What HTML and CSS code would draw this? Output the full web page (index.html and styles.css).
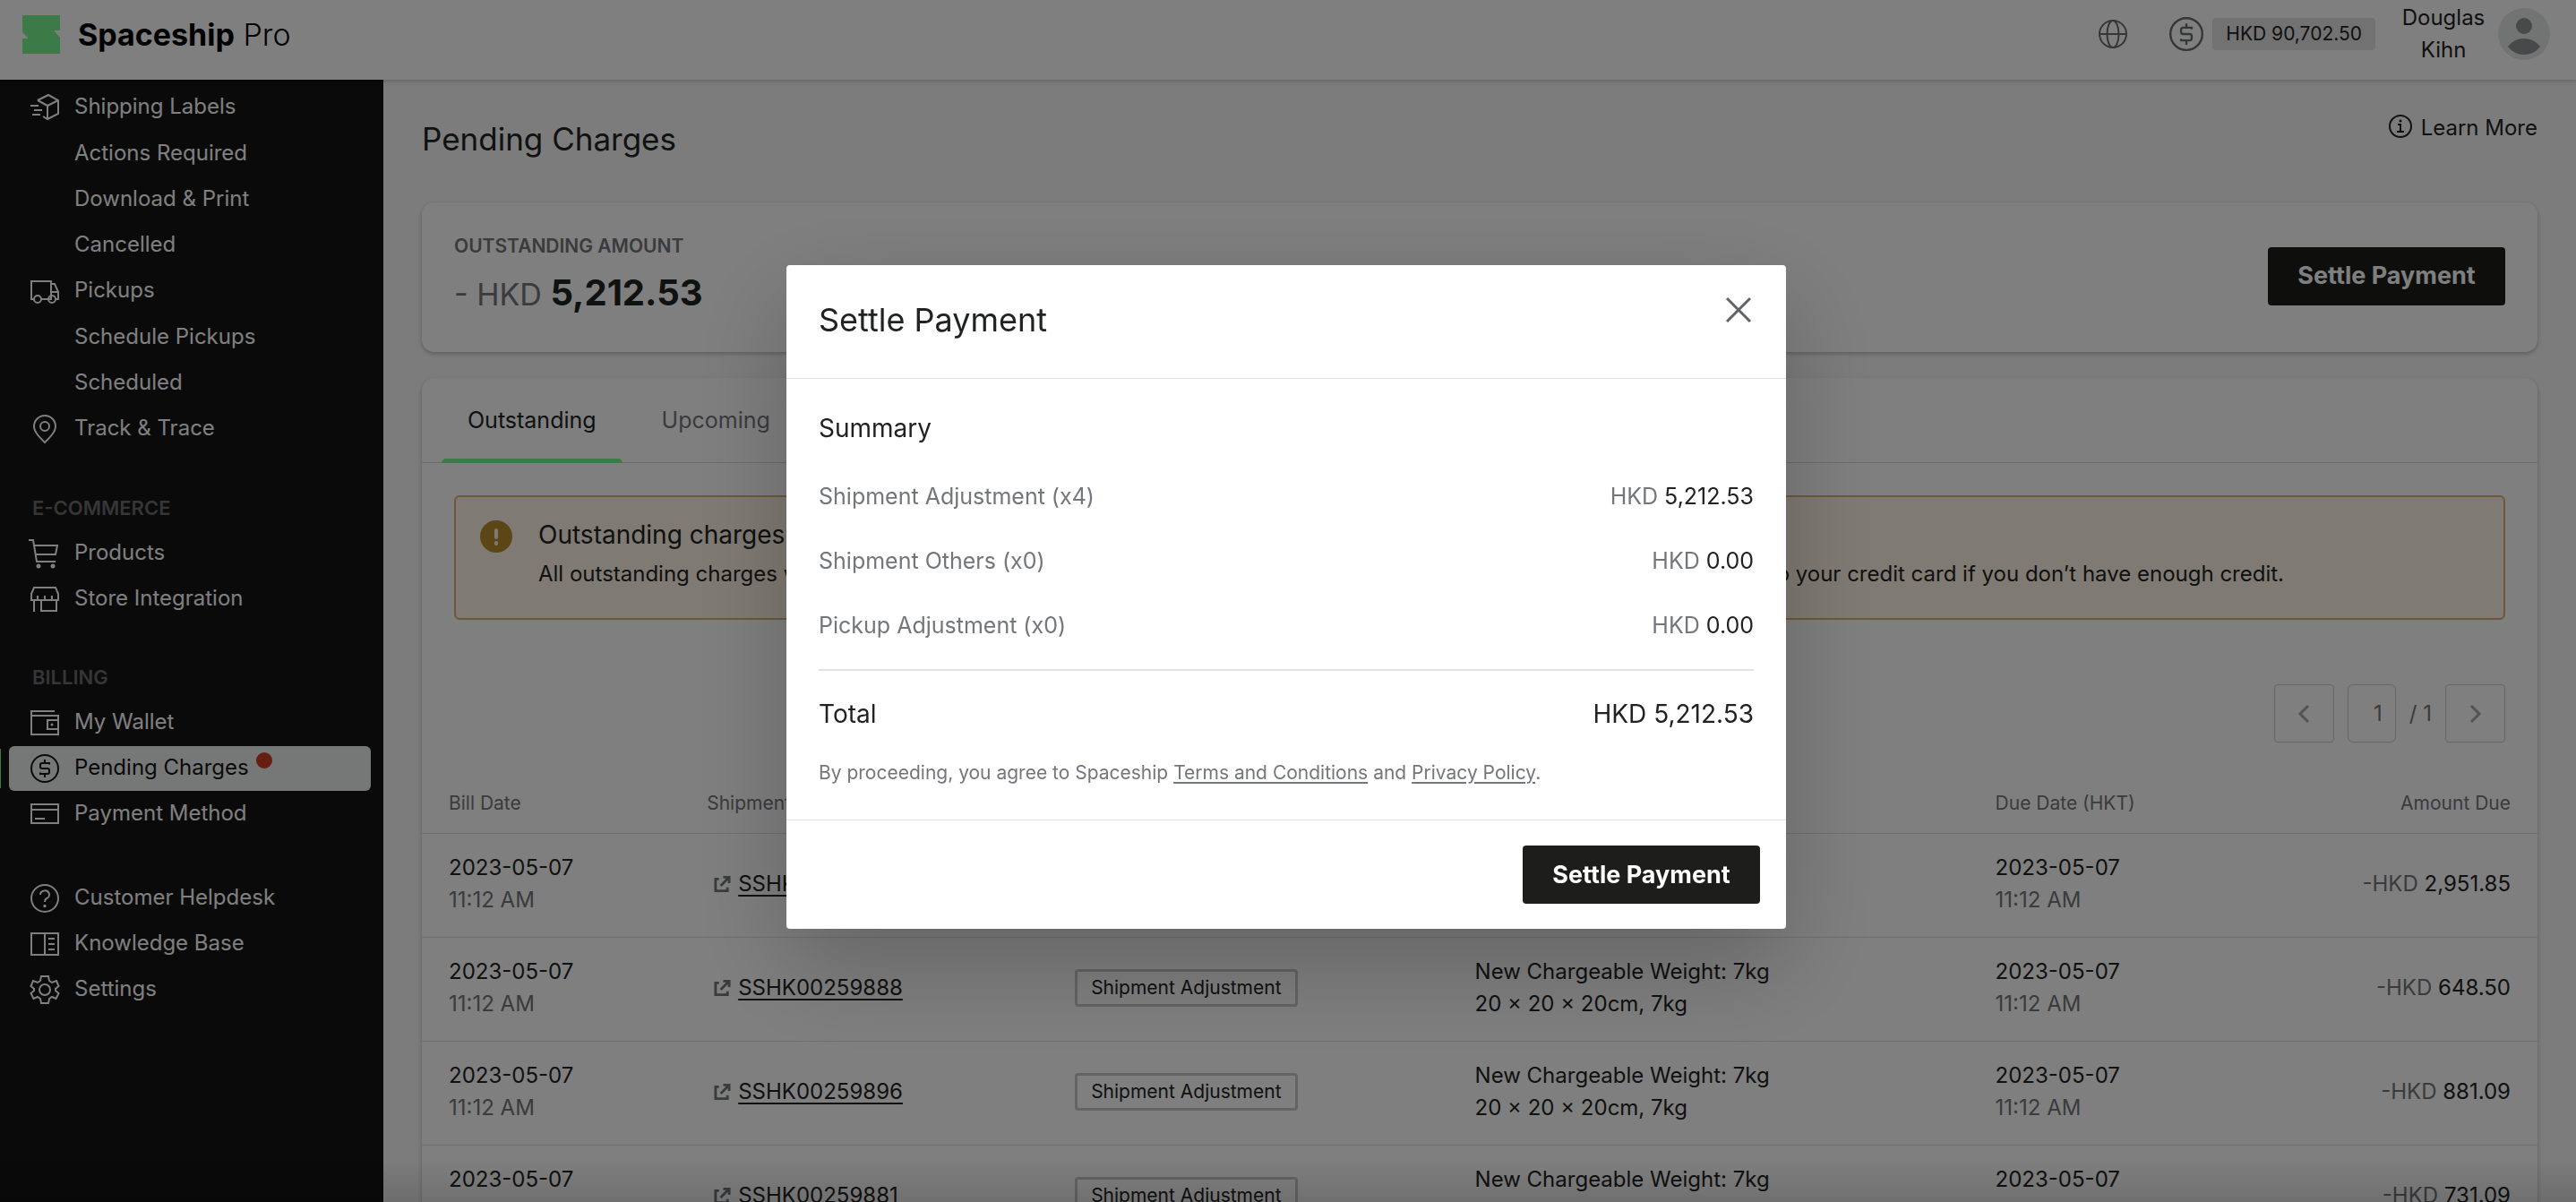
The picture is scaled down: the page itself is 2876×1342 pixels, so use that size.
FILE: index.html
```html
<!DOCTYPE html>
<html lang="en">
<head>
<meta charset="UTF-8">
<meta name="viewport" content="width=device-width, initial-scale=1.0">
<title>Pending Charges - Spaceship Pro</title>
<link rel="stylesheet" href="styles.css">
</head>
<body>
  <!-- Shared icons -->
  <svg class="sprite" aria-hidden="true">
    <symbol id="icon-dollar" viewBox="0 0 32 32">
      <circle cx="16" cy="16" r="15"/>
      <path d="M21 11.5V10H13a2 2 0 0 0-2 2v2a2 2 0 0 0 2 2h6a2 2 0 0 1 2 2v2a2 2 0 0 1-2 2h-8v-1.5M16 6v4M16 22v4"/>
    </symbol>
    <symbol id="icon-external" viewBox="0 0 20 20">
      <path d="M6 4H2v14h14v-4M8 12l9-9M11 2h7v7"/>
    </symbol>
  </svg>

  <header class="topbar">
    <a class="logo" href="#">
      <svg class="logo-mark" viewBox="0 0 42 43"><path d="M0 0h42v17h-6v1l6 7v18H0V26h6v-1l-6-6z"/></svg>
      <span class="logo-text"><b>Spaceship</b> Pro</span>
    </a>
    <div class="topbar-right">
      <button class="icon-button" aria-label="Language">
        <svg class="icon" viewBox="0 0 32 32"><circle cx="16" cy="16" r="15"/><ellipse cx="16" cy="16" rx="6.5" ry="15"/><path d="M1 16h30"/></svg>
      </button>
      <a class="balance" href="#">
        <svg class="icon icon-balance"><use href="#icon-dollar"/></svg>
        <span class="balance-amount">HKD 90,702.50</span>
      </a>
      <div class="user">
        <span class="user-name">Douglas Kihn</span>
        <svg class="avatar" viewBox="0 0 58 58"><circle class="avatar-bg" cx="29" cy="29" r="29"/><circle cx="29" cy="20" r="9"/><path d="M11 43c9-12 27-12 36 0-9 12-27 12-36 0z"/></svg>
      </div>
    </div>
  </header>

  <div class="layout">
    <nav class="sidebar">
      <ul class="nav-list">
        <li class="nav-group"><a class="nav-item" href="#"><svg class="icon" viewBox="0 0 32 32"><path d="M8 8l12-6 11 6v15l-12 6-5-3M8 8l11 6 12-6M19 14v15M0 14h9M4 19h9M2 24h9"/></svg><span>Shipping Labels</span></a></li>
        <li><a class="nav-item sub" href="#"><span>Actions Required</span></a></li>
        <li><a class="nav-item sub" href="#"><span>Download &amp; Print</span></a></li>
        <li><a class="nav-item sub" href="#"><span>Cancelled</span></a></li>
        <li class="nav-group"><a class="nav-item" href="#"><svg class="icon" viewBox="0 0 32 32"><path d="M4 25H1V5h22v20H12M23 8h4l4 9v8h-3M23 17h8"/><circle cx="8" cy="25" r="4"/><circle cx="24" cy="25" r="4"/></svg><span>Pickups</span></a></li>
        <li><a class="nav-item sub" href="#"><span>Schedule Pickups</span></a></li>
        <li><a class="nav-item sub" href="#"><span>Scheduled</span></a></li>
        <li class="nav-group"><a class="nav-item" href="#"><svg class="icon" viewBox="0 0 32 32"><path d="M16 31C10 25 4 19 4 13a12 12 0 0 1 24 0c0 6-6 12-12 18z"/><circle cx="16" cy="13" r="5"/></svg><span>Track &amp; Trace</span></a></li>
      </ul>
      <h2 class="nav-heading">E-COMMERCE</h2>
      <ul class="nav-list">
        <li><a class="nav-item" href="#"><svg class="icon" viewBox="0 0 32 32"><path d="M-2 1h5l4 24h21M4 7h26l-2 10H6"/><circle class="dot" cx="9" cy="30" r="2.5"/><circle class="dot" cx="25" cy="30" r="2.5"/></svg><span>Products</span></a></li>
        <li><a class="nav-item" href="#"><svg class="icon" viewBox="0 0 32 32"><path d="M4 3h24l3 7v7H1v-7zM8 12v5M16 12v5M24 12v5M4 17v13M12 17v12h17V17"/></svg><span>Store Integration</span></a></li>
      </ul>
      <h2 class="nav-heading">BILLING</h2>
      <ul class="nav-list">
        <li><a class="nav-item" href="#"><svg class="icon" viewBox="0 0 32 32"><path d="M27 3H1v26h30V8H1M31 13H19v10h12"/><circle class="dot" cx="24" cy="18" r="1.5"/></svg><span>My Wallet</span></a></li>
        <li><a class="nav-item active" href="#" aria-current="page"><svg class="icon"><use href="#icon-dollar"/></svg><span>Pending Charges</span><i class="alert-dot"></i></a></li>
        <li><a class="nav-item" href="#"><svg class="icon" viewBox="0 0 32 32"><path d="M1 5h30v21H1zM1 11h30M5 21h11"/></svg><span>Payment Method</span></a></li>
      </ul>
      <ul class="nav-list nav-help">
        <li><a class="nav-item" href="#"><svg class="icon" viewBox="0 0 32 32"><circle cx="16" cy="16" r="15"/><path d="M11 12a5 4.500 0 1 1 7 4c-2 1-2 2-2 4"/><circle class="dot" cx="16" cy="24.5" r="1.7"/></svg><span>Customer Helpdesk</span></a></li>
        <li><a class="nav-item" href="#"><svg class="icon" viewBox="0 0 32 32"><path d="M1 4h30v24H1zM16 4v24M20 10h7M20 16h7M20 22h7"/></svg><span>Knowledge Base</span></a></li>
        <li><a class="nav-item" href="#"><svg class="icon" viewBox="0 0 32 32"><path d="M12 1h8l1 5 3 2 5-2 2.500 6-3.500 3v2l3.500 3-3 6-4.500-2-3 2-1 5h-8l-1-5-3-2-4.500 2-3-6L4 17v-2L.500 12 3 6l5 2 3-2z"/><circle cx="16" cy="16" r="6"/></svg><span>Settings</span></a></li>
      </ul>
    </nav>

    <main class="content">
      <div class="page-head">
        <h1>Pending Charges</h1>
        <a class="learn-more" href="#">
          <svg class="icon icon-info" viewBox="0 0 26 26"><circle cx="13" cy="13" r="12"/><path d="M10 11h3v8M9 19h8"/><circle class="dot" cx="13" cy="7" r="1.5"/></svg>
          Learn More
        </a>
      </div>

      <section class="card outstanding">
        <div>
          <div class="outstanding-label">OUTSTANDING AMOUNT</div>
          <div class="outstanding-amount">- HKD <b>5,212.53</b></div>
        </div>
        <button class="button">Settle Payment</button>
      </section>

      <section class="card">
        <div class="tabs" role="tablist">
          <button class="tab selected" role="tab" aria-selected="true">Outstanding</button>
          <button class="tab" role="tab" aria-selected="false">Upcoming</button>
        </div>

        <div class="notice">
          <svg class="notice-icon" viewBox="0 0 36 36"><circle cx="18" cy="18" r="18"/><path d="M18 11v8M18 25v1"/></svg>
          <div>
            <h3>Outstanding charges</h3>
            <p>All outstanding charges will be settled automatically with the credit in your wallet every week. We will charge the balance to your credit card if you don’t have enough credit.</p>
          </div>
        </div>

        <div class="pager">
          <button class="pager-button" aria-label="Previous page" disabled><svg viewBox="0 0 14 22"><path d="M12 2L3 11l9 9"/></svg></button>
          <input class="pager-input" type="text" value="1" aria-label="Page">
          <span>/ 1</span>
          <button class="pager-button" aria-label="Next page" disabled><svg viewBox="0 0 14 22"><path d="M2 2l9 9-9 9"/></svg></button>
        </div>

        <table class="charges">
          <colgroup>
            <col class="col-bill"><col class="col-shipment"><col class="col-type"><col class="col-detail"><col class="col-due"><col>
          </colgroup>
          <thead>
            <tr><th>Bill Date</th><th>Shipment</th><th>Type</th><th>Description</th><th>Due Date (HKT)</th><th class="amount">Amount Due</th></tr>
          </thead>
          <tbody>
            <tr>
              <td>2023-05-07<br><span class="muted">11:12 AM</span></td>
              <td><div class="shipment"><svg><use href="#icon-external"/></svg><a href="#">SSHK00259890</a></div></td>
              <td><span class="tag">Shipment Adjustment</span></td>
              <td>New Chargeable Weight: 7kg<br>20 × 20 × 20cm, 7kg</td>
              <td>2023-05-07<br><span class="muted">11:12 AM</span></td>
              <td class="amount"><span class="muted">-HKD</span> 2,951.85</td>
            </tr>
            <tr>
              <td>2023-05-07<br><span class="muted">11:12 AM</span></td>
              <td><div class="shipment"><svg><use href="#icon-external"/></svg><a href="#">SSHK00259888</a></div></td>
              <td><span class="tag">Shipment Adjustment</span></td>
              <td>New Chargeable Weight: 7kg<br>20 × 20 × 20cm, 7kg</td>
              <td>2023-05-07<br><span class="muted">11:12 AM</span></td>
              <td class="amount"><span class="muted">-HKD</span> 648.50</td>
            </tr>
            <tr>
              <td>2023-05-07<br><span class="muted">11:12 AM</span></td>
              <td><div class="shipment"><svg><use href="#icon-external"/></svg><a href="#">SSHK00259896</a></div></td>
              <td><span class="tag">Shipment Adjustment</span></td>
              <td>New Chargeable Weight: 7kg<br>20 × 20 × 20cm, 7kg</td>
              <td>2023-05-07<br><span class="muted">11:12 AM</span></td>
              <td class="amount"><span class="muted">-HKD</span> 881.09</td>
            </tr>
            <tr>
              <td>2023-05-07<br><span class="muted">11:12 AM</span></td>
              <td><div class="shipment"><svg><use href="#icon-external"/></svg><a href="#">SSHK00259881</a></div></td>
              <td><span class="tag">Shipment Adjustment</span></td>
              <td>New Chargeable Weight: 7kg<br>20 × 20 × 20cm, 7kg</td>
              <td>2023-05-07<br><span class="muted">11:12 AM</span></td>
              <td class="amount"><span class="muted">-HKD</span> 731.09</td>
            </tr>
          </tbody>
        </table>
      </section>
    </main>
  </div>

  <!-- Settle Payment modal -->
  <div class="modal-overlay">
    <div class="modal" role="dialog" aria-modal="true" aria-labelledby="modal-title">
      <div class="modal-header">
        <h2 id="modal-title">Settle Payment</h2>
        <button class="modal-close" aria-label="Close"><svg viewBox="0 0 30 30"><path d="M2 2l26 26M28 2L2 28"/></svg></button>
      </div>
      <div class="modal-body">
        <h3>Summary</h3>
        <div class="summary-row"><span class="muted">Shipment Adjustment (x4)</span><span><span class="muted">HKD</span> 5,212.53</span></div>
        <div class="summary-row"><span class="muted">Shipment Others (x0)</span><span><span class="muted">HKD</span> 0.00</span></div>
        <div class="summary-row"><span class="muted">Pickup Adjustment (x0)</span><span><span class="muted">HKD</span> 0.00</span></div>
        <div class="summary-row total"><span>Total</span><span>HKD 5,212.53</span></div>
        <p class="terms">By proceeding, you agree to Spaceship <a href="#">Terms and Conditions</a> and <a href="#">Privacy Policy</a>.</p>
      </div>
      <div class="modal-footer">
        <button class="button">Settle Payment</button>
      </div>
    </div>
  </div>
</body>
</html>
```

FILE: styles.css
```css
* {
  box-sizing: border-box;
}

body {
  margin: 0;
  height: 100vh;
  display: flex;
  flex-direction: column;
  overflow: hidden;
  font-family: Inter, "Liberation Sans", sans-serif;
  font-size: 24px;
  line-height: 36px;
  color: #212322;
  background-color: #f9f9f9;
}

h1, h2, h3, p, ul {
  margin: 0;
  padding: 0;
  font-weight: 400;
}

ul {
  list-style: none;
}

a {
  color: inherit;
  text-decoration: none;
}

button, input {
  font: inherit;
  color: inherit;
}

.sprite {
  position: absolute;
  width: 0;
  height: 0;
}

.icon {
  flex: none;
  width: 32px;
  height: 32px;
  fill: none;
  stroke: currentColor;
  stroke-width: 2;
  overflow: visible;
}

.icon .dot {
  fill: currentColor;
  stroke: none;
}

.muted {
  color: #73767b;
}

/* Top bar */
.topbar {
  flex: none;
  height: 89px;
  display: flex;
  justify-content: space-between;
  align-items: flex-start;
  padding: 0 29px 0 25px;
  background-color: #fff;
  box-shadow: 0 1px 5px rgba(0, 0, 0, 0.25);
  z-index: 1;
}

.logo {
  display: flex;
  align-items: center;
  gap: 20px;
  height: 77px;
  color: #000;
}

.logo-mark {
  width: 42px;
  height: 43px;
  fill: #78f690;
}

.logo-text {
  font-size: 34px;
  font-weight: 300;
}

.logo-text b {
  font-weight: 700;
}

.topbar-right {
  display: flex;
  align-items: center;
  height: 76px;
  color: #6a6d71;
}

.icon-button {
  display: flex;
  margin-right: 47px;
  padding: 0;
  border: none;
  background: none;
}

.balance {
  display: flex;
  align-items: center;
  gap: 10px;
  margin-right: 29px;
}

.icon-balance {
  width: 38px;
  height: 38px;
}

.balance-amount {
  padding: 0 15px;
  border-radius: 4px;
  font-size: 21px;
  color: #212322;
  background-color: #e4e4e4;
}

.user {
  display: flex;
  align-items: center;
  gap: 14px;
}

.user-name {
  width: 94px;
  text-align: center;
  color: #212322;
}

.avatar {
  width: 58px;
  height: 58px;
  fill: #8f9296;
}

.avatar-bg {
  fill: #e5e7e6;
}

/* Sidebar */
.layout {
  flex: 1;
  min-height: 0;
  display: flex;
}

.sidebar {
  flex: none;
  width: 428px;
  padding-top: 6px;
  color: #fff;
  background-color: #141414;
}

.nav-list li {
  position: relative;
  padding: 0 14px 1px 10px;
}

.nav-list .nav-group {
  padding-bottom: 2px;
}

.nav-item {
  display: flex;
  align-items: center;
  gap: 17px;
  height: 50px;
  padding-left: 24px;
  border-radius: 6px;
}

.nav-item span {
  padding-bottom: 2px;
}

.nav-item.sub {
  padding-left: 73px;
}

.nav-item.active {
  color: #141414;
  background-color: #edf0ef;
}

.nav-item.active::before {
  content: "";
  position: absolute;
  left: 0;
  top: 3px;
  width: 1px;
  height: 44px;
  background-color: #78f690;
}

.alert-dot {
  width: 18px;
  height: 18px;
  margin: 0 0 18px -9px;
  border-radius: 50%;
  background-color: #cc3c24;
}

.nav-heading {
  margin: 43px 0 8px;
  padding-left: 36px;
  font-size: 22px;
  font-weight: 600;
  color: #6a6c6e;
}

.nav-help {
  margin-top: 43px;
}

/* Content */
.content {
  flex: 1;
  min-width: 0;
  padding: 36px 43px 0;
}

.page-head {
  display: flex;
  justify-content: space-between;
  align-items: flex-start;
  margin-bottom: 41px;
}

.page-head h1 {
  font-size: 35px;
  line-height: 60px;
}

.learn-more {
  display: flex;
  gap: 10px;
}

.icon-info {
  width: 26px;
  height: 26px;
  margin-top: 3px;
}

.card {
  margin-bottom: 29px;
  border-radius: 14px;
  background-color: #fff;
  box-shadow: 0 2px 5px rgba(0, 0, 0, 0.25);
}

.outstanding {
  display: flex;
  justify-content: space-between;
  align-items: center;
  padding: 35px 36px 38px;
}

.outstanding-label {
  font-size: 21px;
  font-weight: 600;
  line-height: 28px;
  color: #73767b;
}

.outstanding-amount {
  margin-top: 12px;
  font-size: 34px;
  line-height: 52px;
  color: #73767b;
}

.outstanding-amount b {
  font-size: 40px;
  color: #212322;
}

.button {
  min-width: 265px;
  height: 65px;
  padding: 0 24px;
  border: none;
  border-radius: 4px;
  font-size: 27px;
  font-weight: 700;
  color: #fff;
  background-color: #1d1d1b;
}

.tabs {
  display: flex;
  gap: 15px;
  padding-left: 22px;
  border-bottom: 1px solid #d5d7d7;
}

.tab {
  position: relative;
  height: 94px;
  padding: 0 29px;
  border: none;
  font-size: 25px;
  color: #73767b;
  background: none;
}

.tab.selected {
  color: #212322;
}

.tab.selected::after {
  content: "";
  position: absolute;
  left: 0;
  right: 0;
  bottom: -1px;
  height: 5px;
  border-radius: 5px 5px 0 0;
  background-color: #78f690;
}

.notice {
  display: flex;
  gap: 29px;
  margin: 36px 36px 0;
  padding: 22px 27px 31px;
  border: 2px solid #dab375;
  border-radius: 6px;
  background-color: #fef4e6;
}

.notice-icon {
  flex: none;
  width: 36px;
  height: 36px;
  margin-top: 4px;
  fill: #bb8c2c;
}

.notice-icon path {
  stroke: #fef4e6;
  stroke-width: 4;
  stroke-linecap: round;
}

.notice h3 {
  margin-bottom: 6px;
  font-size: 28px;
  line-height: 40px;
}

.notice p {
  white-space: nowrap;
}

.pager {
  display: flex;
  justify-content: flex-end;
  align-items: center;
  gap: 15px;
  margin: 72px 36px 35px;
  color: #73767b;
}

.pager-button {
  display: flex;
  align-items: center;
  justify-content: center;
  width: 67px;
  height: 65px;
  border: 1px solid #c8cacb;
  border-radius: 4px;
  background: none;
}

.pager-button svg {
  width: 14px;
  height: 22px;
  fill: none;
  stroke: #a4a7aa;
  stroke-width: 3;
}

.pager-input {
  width: 54px;
  height: 65px;
  padding: 0 14px;
  border: 1px solid #c8cacb;
  border-radius: 6px;
  text-align: right;
  background: none;
}

.charges {
  width: 100%;
  table-layout: fixed;
  border-collapse: collapse;
}

.col-bill {
  width: 12.2%;
}

.col-shipment {
  width: 17.4%;
}

.col-type {
  width: 18.9%;
}

.col-detail {
  width: 24.6%;
}

.col-due {
  width: 12%;
}

.charges th {
  height: 66px;
  padding: 0 30px;
  border-bottom: 1px solid #dddfdf;
  font-size: 21px;
  font-weight: 400;
  text-align: left;
  color: #73767b;
}

.charges td {
  padding: 20px 30px 23px;
  border-bottom: 1px solid #dddfdf;
}

.charges .amount {
  text-align: right;
}

.shipment {
  display: flex;
  align-items: center;
  gap: 8px;
  padding-left: 8px;
}

.shipment svg {
  width: 19px;
  height: 20px;
  fill: none;
  stroke: #73767b;
  stroke-width: 3;
}

.shipment a {
  text-decoration: underline;
  text-underline-offset: 4px;
}

.tag {
  display: inline-block;
  padding: 0 15px;
  border: 3px solid #c6c9c9;
  border-radius: 4px;
  font-size: 21px;
}

/* Modal */
.modal-overlay {
  position: fixed;
  inset: 0;
  z-index: 10;
  display: flex;
  align-items: center;
  justify-content: center;
  padding: 0 4px 9px 0;
  background: linear-gradient(to top, rgba(0, 0, 0, 0.56), rgba(0, 0, 0, 0.5) 48px);
}

.modal {
  width: 1116px;
  max-width: 100%;
  border-radius: 4px;
  background-color: #fff;
  box-shadow: 0 40px 110px rgba(0, 0, 0, 0.22);
}

.modal-header {
  display: flex;
  justify-content: space-between;
  align-items: flex-start;
  padding: 33px 36px 37px;
  border-bottom: 1px solid #e2e3e3;
}

.modal-header h2 {
  font-size: 36px;
  line-height: 56px;
}

.modal-close {
  display: flex;
  padding: 2px;
  border: none;
  background: none;
}

.modal-close svg {
  width: 30px;
  height: 30px;
  stroke: #5f6266;
  stroke-width: 3;
}

.modal-body {
  padding: 37px 36px 34px;
}

.modal-body h3 {
  margin-bottom: 22px;
  font-size: 28px;
}

.summary-row {
  display: flex;
  justify-content: space-between;
  padding: 18px 0;
  font-size: 25px;
}

.summary-row.total {
  margin-top: 13px;
  padding: 30px 0;
  border-top: 2px solid #e2e3e3;
  font-size: 28px;
}

.terms {
  font-size: 21px;
  color: #73767b;
}

.terms a {
  text-decoration: underline;
  text-underline-offset: 3px;
}

.modal-footer {
  display: flex;
  justify-content: flex-end;
  padding: 28px 29px;
  border-top: 1px solid #e2e3e3;
}
```
